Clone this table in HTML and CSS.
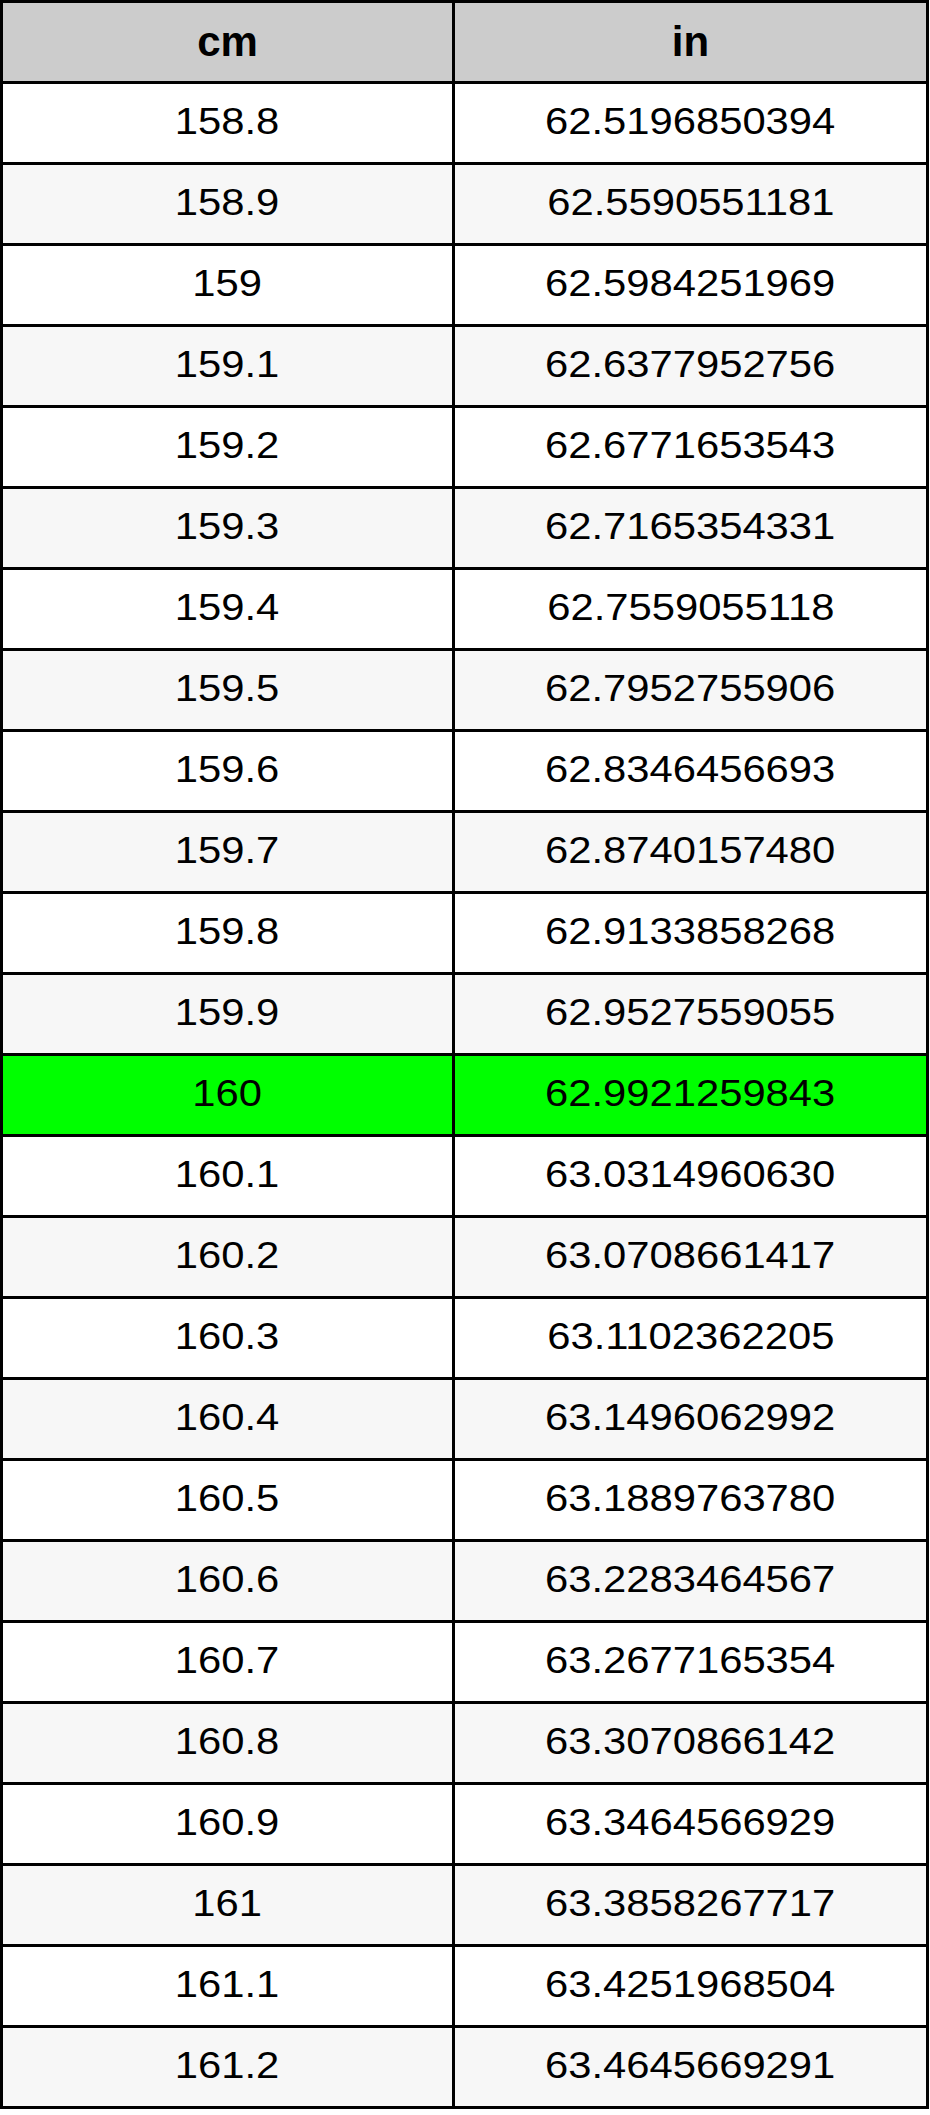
FILE: index.html
```html
<!DOCTYPE html>
<html lang="en">
<head>
<meta charset="utf-8">
<title>cm to in</title>
<link rel="stylesheet" href="styles.css">
</head>
<body>
<div class="conv">
  <div class="cell head"><span class="txt">cm</span></div>
  <div class="cell head"><span class="txt">in</span></div>

  <div class="cell"><span class="txt">158.8</span></div><div class="cell"><span class="txt">62.5196850394</span></div>
  <div class="cell alt"><span class="txt">158.9</span></div><div class="cell alt"><span class="txt">62.5590551181</span></div>
  <div class="cell"><span class="txt">159</span></div><div class="cell"><span class="txt">62.5984251969</span></div>
  <div class="cell alt"><span class="txt">159.1</span></div><div class="cell alt"><span class="txt">62.6377952756</span></div>
  <div class="cell"><span class="txt">159.2</span></div><div class="cell"><span class="txt">62.6771653543</span></div>
  <div class="cell alt"><span class="txt">159.3</span></div><div class="cell alt"><span class="txt">62.7165354331</span></div>
  <div class="cell"><span class="txt">159.4</span></div><div class="cell"><span class="txt">62.7559055118</span></div>
  <div class="cell alt"><span class="txt">159.5</span></div><div class="cell alt"><span class="txt">62.7952755906</span></div>
  <div class="cell"><span class="txt">159.6</span></div><div class="cell"><span class="txt">62.8346456693</span></div>
  <div class="cell alt"><span class="txt">159.7</span></div><div class="cell alt"><span class="txt">62.8740157480</span></div>
  <div class="cell"><span class="txt">159.8</span></div><div class="cell"><span class="txt">62.9133858268</span></div>
  <div class="cell alt"><span class="txt">159.9</span></div><div class="cell alt"><span class="txt">62.9527559055</span></div>
  <div class="cell hl"><span class="txt">160</span></div><div class="cell hl"><span class="txt">62.9921259843</span></div>
  <div class="cell"><span class="txt">160.1</span></div><div class="cell"><span class="txt">63.0314960630</span></div>
  <div class="cell alt"><span class="txt">160.2</span></div><div class="cell alt"><span class="txt">63.0708661417</span></div>
  <div class="cell"><span class="txt">160.3</span></div><div class="cell"><span class="txt">63.1102362205</span></div>
  <div class="cell alt"><span class="txt">160.4</span></div><div class="cell alt"><span class="txt">63.1496062992</span></div>
  <div class="cell"><span class="txt">160.5</span></div><div class="cell"><span class="txt">63.1889763780</span></div>
  <div class="cell alt"><span class="txt">160.6</span></div><div class="cell alt"><span class="txt">63.2283464567</span></div>
  <div class="cell"><span class="txt">160.7</span></div><div class="cell"><span class="txt">63.2677165354</span></div>
  <div class="cell alt"><span class="txt">160.8</span></div><div class="cell alt"><span class="txt">63.3070866142</span></div>
  <div class="cell"><span class="txt">160.9</span></div><div class="cell"><span class="txt">63.3464566929</span></div>
  <div class="cell alt"><span class="txt">161</span></div><div class="cell alt"><span class="txt">63.3858267717</span></div>
  <div class="cell"><span class="txt">161.1</span></div><div class="cell"><span class="txt">63.4251968504</span></div>
  <div class="cell alt"><span class="txt">161.2</span></div><div class="cell alt"><span class="txt">63.4645669291</span></div>
</div>
</body>
</html>
```
FILE: styles.css
```css
html, body {
  margin: 0;
  padding: 0;
  background: #ffffff;
}

.conv {
  display: grid;
  grid-template-columns: 452px 474px;
  grid-auto-rows: 81px;
  width: 929px;
  box-sizing: border-box;
  border-left: 3px solid #000;
  border-top: 3px solid #000;
  font-family: "Liberation Sans", Arial, sans-serif;
  color: #000;
}

.cell {
  box-sizing: border-box;
  border-right: 3px solid #000;
  border-bottom: 3px solid #000;
  background: #ffffff;
  display: flex;
  align-items: center;
  justify-content: center;
  font-size: 36px;
  padding-bottom: 2px;
}

.txt {
  display: inline-block;
  transform: scaleX(1.16);
}

.cell.alt {
  background: #f7f7f7;
}

.cell.hl {
  background: #00ff00;
}

.cell.head {
  background: #cccccc;
  font-weight: bold;
  font-size: 42px;
  padding-bottom: 0;
}

.cell.head .txt {
  transform: none;
}
```
